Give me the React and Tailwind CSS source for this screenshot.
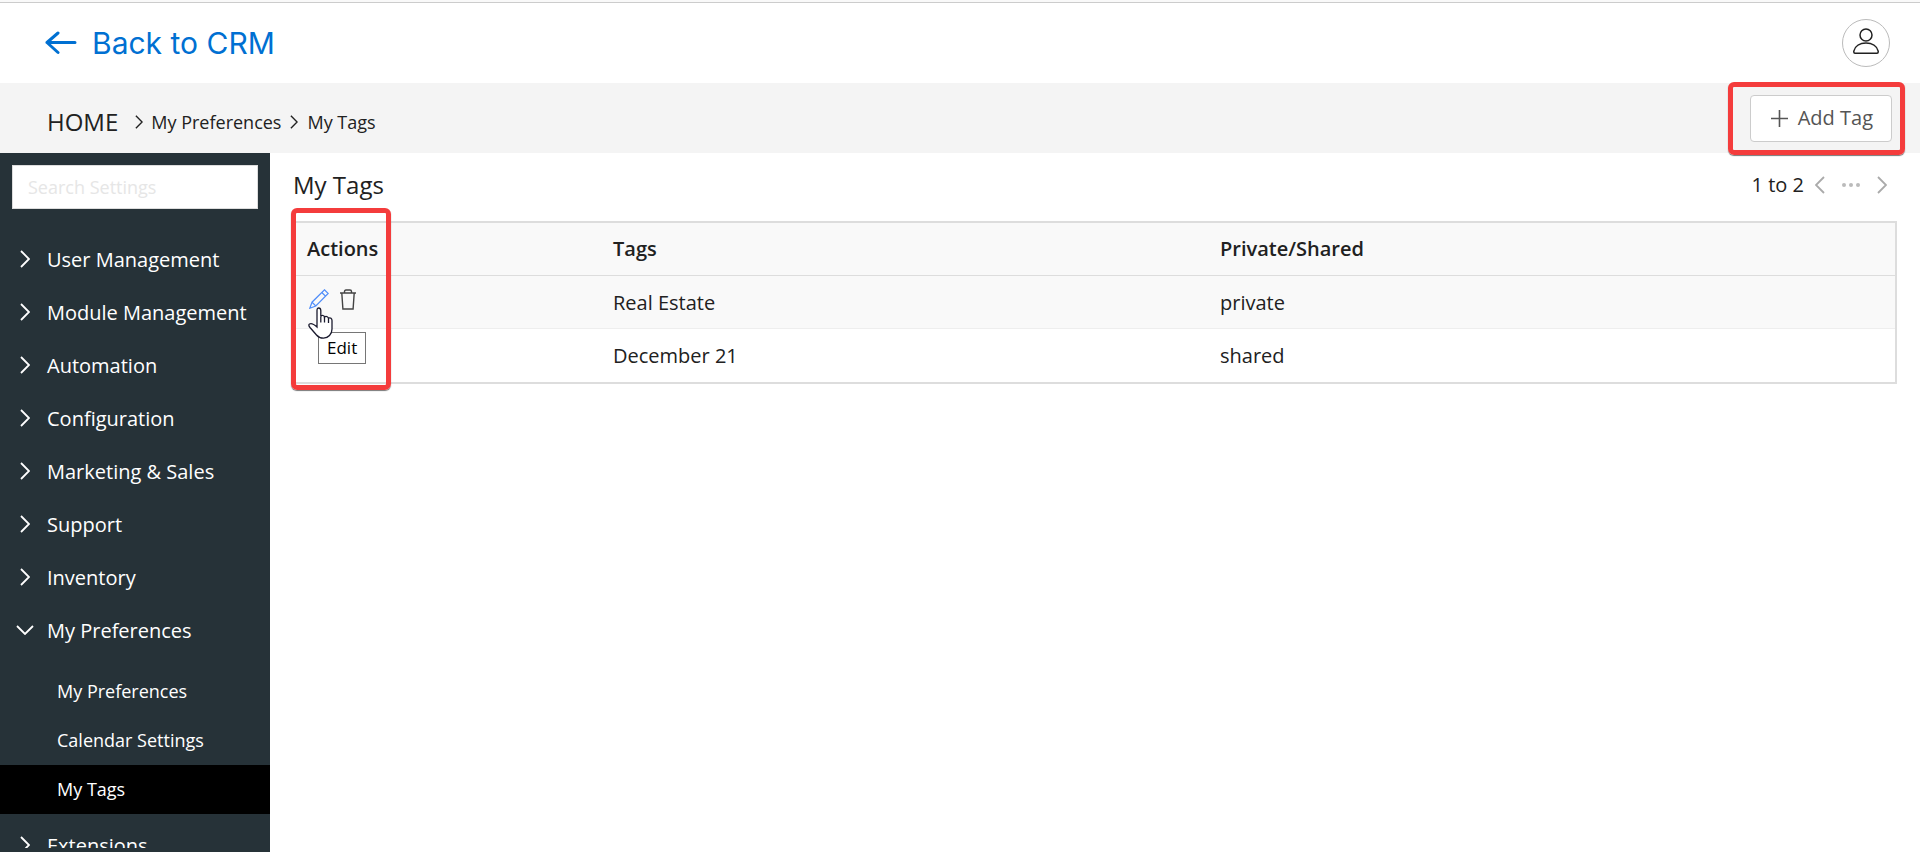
import React, { useState } from "react";

const menu = [
  "User Management",
  "Module Management",
  "Automation",
  "Configuration",
  "Marketing & Sales",
  "Support",
  "Inventory",
  "My Preferences",
];

const subMenu = ["My Preferences", "Calendar Settings", "My Tags"];

const tags = [
  { name: "Real Estate", visibility: "private" },
  { name: "December 21", visibility: "shared" },
];

function Chevron({ className }) {
  return (
    <svg viewBox="0 0 10 18" className={className} fill="none" stroke="currentColor" strokeWidth="1.8">
      <path d="M1 1l8 8-8 8" />
    </svg>
  );
}

function MenuItem({ label, open }) {
  return (
    <button type="button" className="flex h-[53px] w-full items-center pl-5 text-left text-xl">
      <span className="flex w-[27px] pb-[2px]">
        <Chevron className={`h-[18px] w-[10px] ${open ? "rotate-90" : ""}`} />
      </span>
      {label}
    </button>
  );
}

function Sidebar() {
  const [search, setSearch] = useState("");
  return (
    <aside className="w-[270px] shrink-0 overflow-hidden border-b-4 border-[#263238] bg-[#263238] text-white">
      <div className="p-3">
        <input
          type="text"
          aria-label="Search Settings"
          placeholder="Search Settings"
          value={search}
          onChange={(e) => setSearch(e.target.value)}
          className="h-11 w-full border border-[#ddd] bg-white px-[15px] text-lg text-[#212121] placeholder:text-[#e6e6e6] focus:outline-none"
        />
      </div>
      <nav className="pt-3">
        {menu.map((item) => (
          <MenuItem key={item} label={item} open={item === "My Preferences"} />
        ))}
        <ul className="pt-[10px] pb-[5px]">
          {subMenu.map((item) => (
            <li key={item}>
              <a
                href="#"
                className={`flex h-[49px] items-center pb-[2px] pl-[57px] text-lg ${item === "My Tags" ? "bg-black" : ""}`}
              >
                {item}
              </a>
            </li>
          ))}
        </ul>
        <MenuItem label="Extensions" />
      </nav>
    </aside>
  );
}

function EditAction() {
  return (
    <div className="relative">
      <button type="button" aria-label="Edit" className="block text-[#4f8df9]">
        <svg viewBox="0 0 20 20" className="h-5 w-5" fill="none" stroke="currentColor" strokeWidth="1.2">
          <path d="M.8 19.200L3 13.200L15.500 .8L19.200 4.500L6.800 17zM3 13.200L6.800 17M12.800 3.500l3.700 3.700" />
        </svg>
      </button>
      <span className="absolute top-[43px] left-[9px] z-10 border border-[#767676] bg-white px-2 text-[17px] leading-[30px] text-black">
        Edit
      </span>
      <svg
        viewBox="0 0 25 32"
        className="absolute top-[18px] -left-[1px] z-20 h-8 w-[25px] max-w-none"
        fill="#fff"
        stroke="#1a1a2e"
        strokeWidth="1.3"
      >
        <path d="M9 18V3.500Q9 1 10.800 1T12.800 3.500V9.500Q13.500 8 15 8.500T16.500 10Q18 9 19.200 9.800T20.500 11.200Q22 10.500 23 11.300T24 13.500V22Q24 26 21.500 28.500Q19 31.200 15.500 31.200Q11 31 8.500 28L2 20.500Q0 18 1.500 17Q4 15.500 9 20z" />
        <path d="M12.800 9.500V15.500M16.500 10V15.500M20.500 11.200V16" />
      </svg>
    </div>
  );
}

function DeleteAction() {
  return (
    <button type="button" aria-label="Delete" className="block text-[#444]">
      <svg viewBox="0 0 16 21" className="h-[21px] w-4" fill="none" stroke="currentColor" strokeWidth="1.4">
        <path d="M0 4h16M1.800 4l1.100 16h10.200l1.100-16M4.500 4V2.500Q4.500 1 6 1h4q1.500 0 1.500 1.500V4" />
      </svg>
    </button>
  );
}

function TagsTable() {
  return (
    <div className="relative">
      <table className="w-full table-fixed border-2 border-[#ddd] text-left text-xl text-[#212121]">
        <thead>
          <tr className="h-[53px] border-b border-[#ddd] bg-[#f9f9f9]">
            <th className="w-[307px] px-[14px] font-semibold">Actions</th>
            <th className="w-[607px] px-[14px] font-semibold">Tags</th>
            <th className="px-[14px] font-semibold">Private/Shared</th>
          </tr>
        </thead>
        <tbody>
          {tags.map((tag, i) => (
            <tr key={tag.name} className="h-[53px] border-b border-[#eee] last:h-[55px] last:border-b-2 last:border-[#ddd] odd:bg-[#f9f9f9]">
              <td className="px-[14px] pb-1">
                {i === 0 && (
                  <div className="flex gap-[11px] pl-[2px]">
                    <EditAction />
                    <DeleteAction />
                  </div>
                )}
              </td>
              <td className="px-[14px] pt-[2px]">{tag.name}</td>
              <td className="px-[14px] pt-[2px]">{tag.visibility}</td>
            </tr>
          ))}
        </tbody>
      </table>
      <div className="pointer-events-none absolute -top-[13px] left-0 z-30 h-[182px] w-[100px] rounded-md border-[5px] border-[#f43c3c] shadow-[0_1px_1px_#777]" />
    </div>
  );
}

export default function App() {
  return (
    <div className="flex h-screen flex-col overflow-hidden border-t-2 border-[#f9f9f9] bg-white font-['Open_Sans',sans-serif] text-[#212121]">
      <header className="flex h-[81px] shrink-0 items-center justify-between border-t border-[#ccc] pr-[30px] pl-[45px]">
        <a href="#" className="flex items-center gap-[15px] font-['Inter',sans-serif] text-3xl text-[#0070d2]">
          <svg viewBox="0 0 32 24" className="h-6 w-8" fill="none" stroke="currentColor" strokeWidth="3" strokeLinecap="round" strokeLinejoin="round">
            <path d="M30 11.500H2M13 2L2 11.500l11 10" />
          </svg>
          Back to CRM
        </a>
        <button
          type="button"
          aria-label="Account"
          className="flex h-12 w-12 items-center justify-center rounded-full border border-[#bbb] pb-[4px]"
        >
          <svg viewBox="0 0 26 27" className="h-[27px] w-[26px]" fill="none" stroke="#212121" strokeWidth="1.5">
            <circle cx="13" cy="7" r="6" />
            <path d="M2 25.300h22q1.200 0 1.200-1.200v-1C24 18 19 15 13 15S2 18 .8 23.100v1q0 1.200 1.200 1.200z" />
          </svg>
        </button>
      </header>

      <div className="flex h-[70px] shrink-0 items-center justify-between bg-[#f4f4f4] pr-7 pl-[47px]">
        <nav className="flex items-center pt-2 text-lg">
          <a href="#" className="text-2xl">HOME</a>
          <Chevron className="mr-2 ml-[17px] h-[14px] w-2" />
          <a href="#">My Preferences</a>
          <Chevron className="mx-[9px] h-[14px] w-2" />
          <span>My Tags</span>
        </nav>
        <div className="relative">
          <button
            type="button"
            className="flex h-[47px] items-center gap-[10px] rounded-sm border border-[#ccc] bg-white pr-[18px] pl-5 text-xl text-[#555]"
          >
            <svg viewBox="0 0 17 17" className="h-[17px] w-[17px]" stroke="currentColor" strokeWidth="1.6">
              <path d="M8.500 0v17M0 8.500h17" />
            </svg>
            Add Tag
          </button>
          <div className="pointer-events-none absolute -inset-y-[13px] -right-[13px] -left-[22px] rounded-md border-[5px] border-[#f43c3c] shadow-[0_1px_1px_#777]" />
        </div>
      </div>

      <div className="flex min-h-0 grow">
        <Sidebar />
        <main className="grow pr-[23px] pl-[21px]">
          <div className="mb-1 flex h-16 items-center justify-between">
            <h1 className="pl-[2px] text-2xl">My Tags</h1>
            <div className="flex items-center pr-[10px] text-xl">
              1 to 2
              <button type="button" aria-label="Previous page" className="ml-[11px] text-[#aaa]">
                <Chevron className="h-[18px] w-[10px] rotate-180" />
              </button>
              <button type="button" aria-label="More pages" className="mx-[17px] text-[#bbb]">
                <svg viewBox="0 0 18 4" className="h-1 w-[18px]" fill="currentColor">
                  <circle cx="2" cy="2" r="2" />
                  <circle cx="9" cy="2" r="2" />
                  <circle cx="16" cy="2" r="2" />
                </svg>
              </button>
              <button type="button" aria-label="Next page" className="text-[#aaa]">
                <Chevron className="h-[18px] w-[10px]" />
              </button>
            </div>
          </div>
          <TagsTable />
        </main>
      </div>
    </div>
  );
}
